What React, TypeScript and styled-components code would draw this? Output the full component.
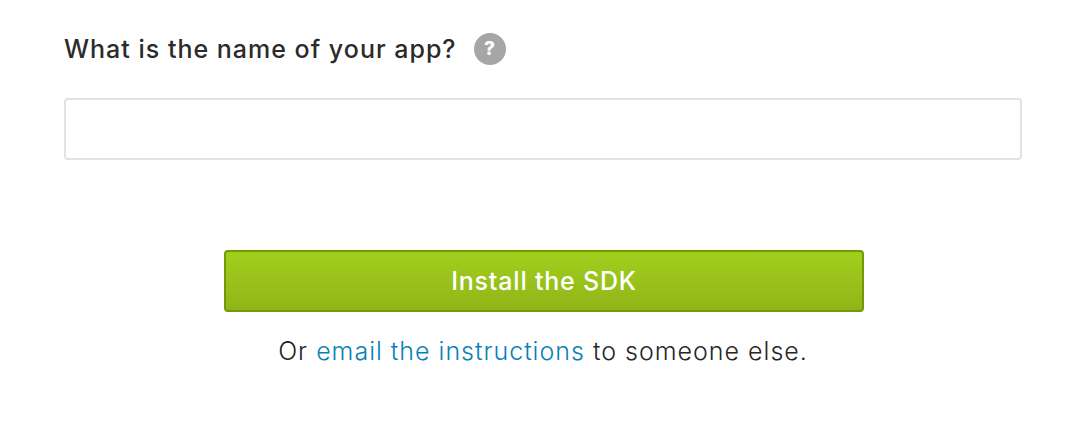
import styled, { createGlobalStyle } from "styled-components";

const GlobalStyle = createGlobalStyle`
  html, body {
    margin: 0;
    padding: 0;
    background: #fff;
  }
`;

export default function App() {
  return (
    <>
      <GlobalStyle />
      <Page>
        <LabelRow>
          <Label htmlFor="app-name">What is the name of your app?</Label>
          <HelpBadge>?</HelpBadge>
        </LabelRow>
        <NameInput id="app-name" type="text" />
        <Actions>
          <InstallButton type="button">Install the SDK</InstallButton>
          <Hint>
            Or <HintLink href="#">email the instructions</HintLink> to someone else.
          </Hint>
        </Actions>
      </Page>
    </>
  );
}

const Page = styled.div`
  width: 1080px;
  height: 434px;
  box-sizing: border-box;
  padding: 33px 58px 0 64px;
  font-family: Inter, "Liberation Sans", sans-serif;
  color: #2b2b2b;
  overflow: hidden;
`;

const LabelRow = styled.div`
  display: flex;
  align-items: center;
  gap: 17px;
  height: 32px;
`;

const Label = styled.label`
  font-size: 25px;
  font-weight: 500;
  line-height: 32px;
  letter-spacing: 1px;
`;

const HelpBadge = styled.span`
  width: 32px;
  height: 32px;
  border-radius: 50%;
  background: #a6a6a6;
  color: #fff;
  font-size: 19px;
  font-weight: 800;
  line-height: 32px;
  text-align: center;
`;

const NameInput = styled.input`
  display: block;
  width: 100%;
  height: 62px;
  box-sizing: border-box;
  margin: 33px 0 0;
  border: 2px solid #e2e2e2;
  border-radius: 4px;
  background: #fff;
  outline: none;
`;

const Actions = styled.div`
  display: flex;
  flex-direction: column;
  align-items: center;
  margin-top: 90px;
`;

const InstallButton = styled.button`
  width: 640px;
  height: 62px;
  box-sizing: border-box;
  margin-left: 2px;
  border: 2px solid #739a06;
  border-radius: 4px;
  background: linear-gradient(#a1cf1e, #91b518);
  color: #fff;
  font-family: inherit;
  font-size: 25px;
  font-weight: 500;
  letter-spacing: 0.8px;
`;

const Hint = styled.p`
  margin: 23px 0 0;
  font-size: 25px;
  font-weight: 350;
  line-height: 32px;
  letter-spacing: 1px;
  color: #262626;
`;

const HintLink = styled.a`
  color: #0880b8;
  text-decoration: none;
`;
